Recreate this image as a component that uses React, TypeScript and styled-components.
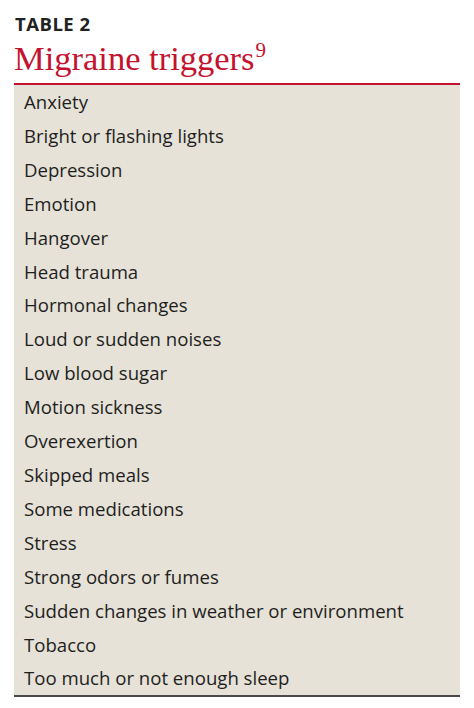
import React from 'react';
import styled, { createGlobalStyle } from 'styled-components';

const GlobalStyle = createGlobalStyle`
  html, body {
    margin: 0;
    padding: 0;
    background: #ffffff;
  }
`;

const Page = styled.div`
  width: 474px;
  height: 708px;
  box-sizing: border-box;
  padding: 12px 14px 0 14px;
  background: #ffffff;
`;

const Label = styled.div`
  font-family: 'Open Sans', 'Liberation Sans', sans-serif;
  font-weight: 700;
  font-size: 18.5px;
  letter-spacing: 0.5px;
  line-height: 24px;
  color: #222222;
  padding-left: 1px;
`;

const Title = styled.h1`
  margin: 0;
  font-family: 'Liberation Serif', 'Times New Roman', serif;
  font-weight: 400;
  font-size: 34.5px;
  line-height: 44px;
  color: #c4122f;
  padding-bottom: 3px;
  border-bottom: 2px solid #c4122f;

  sup {
    font-size: 21px;
    line-height: 0;
    vertical-align: 13px;
    margin-left: 1px;
  }
`;

const List = styled.ul`
  list-style: none;
  margin: 0;
  padding: 0 0 0 10px;
  background: #e6e2d7;
  border-bottom: 2px solid #4a4a4a;
`;

const Item = styled.li`
  font-family: 'Open Sans', 'Liberation Sans', sans-serif;
  font-size: 18.6px;
  line-height: 33.9px;
  color: #1e1e1e;
`;

const triggers = [
  'Anxiety',
  'Bright or flashing lights',
  'Depression',
  'Emotion',
  'Hangover',
  'Head trauma',
  'Hormonal changes',
  'Loud or sudden noises',
  'Low blood sugar',
  'Motion sickness',
  'Overexertion',
  'Skipped meals',
  'Some medications',
  'Stress',
  'Strong odors or fumes',
  'Sudden changes in weather or environment',
  'Tobacco',
  'Too much or not enough sleep',
];

export default function App() {
  return (
    <>
      <GlobalStyle />
      <Page>
        <Label>TABLE 2</Label>
        <Title>
          Migraine triggers<sup>9</sup>
        </Title>
        <List>
          {triggers.map(t => (
            <Item key={t}>{t}</Item>
          ))}
        </List>
      </Page>
    </>
  );
}
